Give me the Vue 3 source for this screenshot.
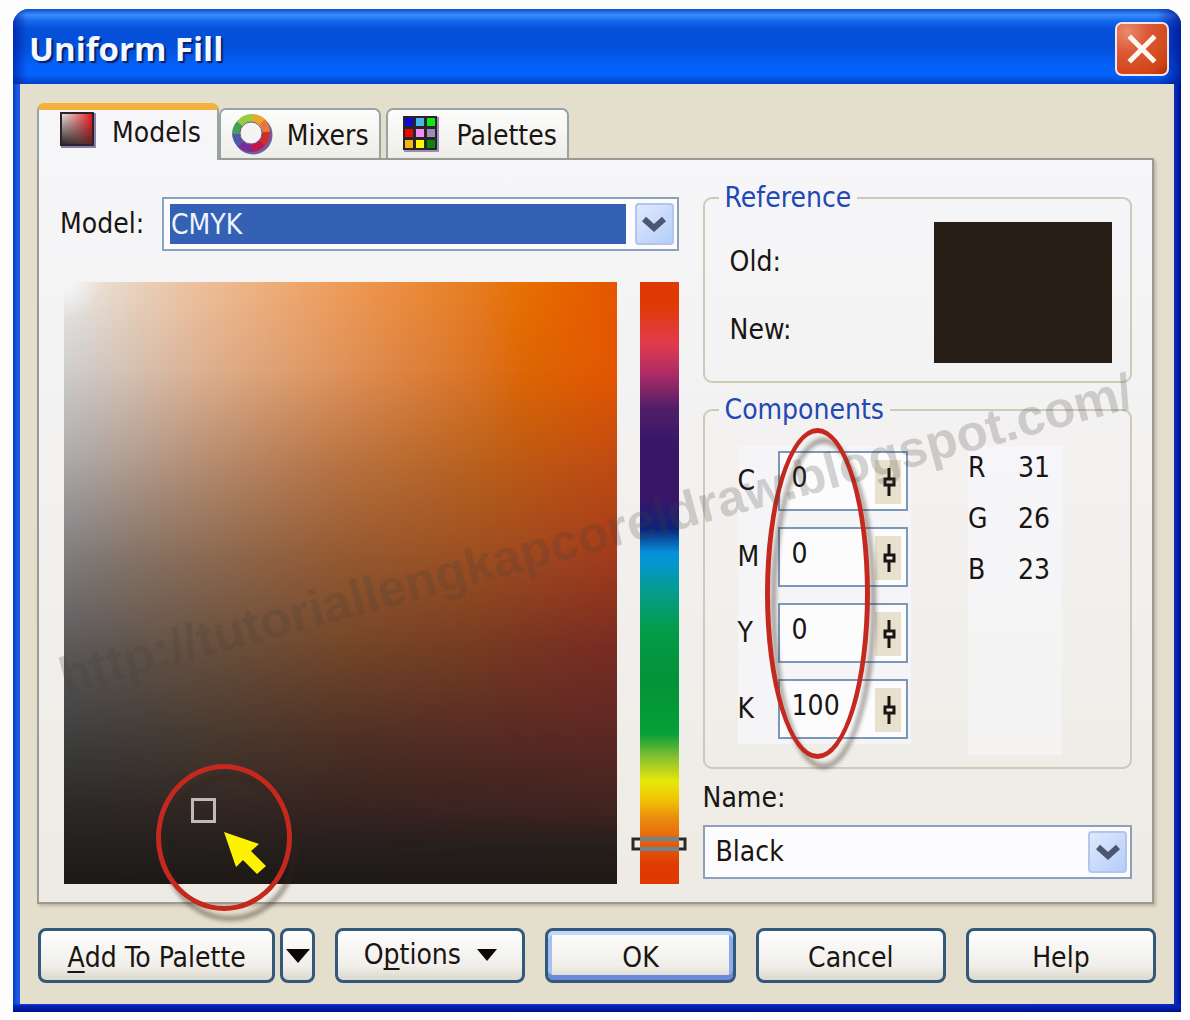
<script setup>
import { ref } from 'vue'

const model = ref('CMYK')
const name = ref('Black')
const inks = ref([
  { id: 'C', value: 0 },
  { id: 'M', value: 0 },
  { id: 'Y', value: 0 },
  { id: 'K', value: 100 }
])
const channels = [
  { id: 'R', value: 31 },
  { id: 'G', value: 26 },
  { id: 'B', value: 23 }
]
const swatches = ['#0a0ae0', '#48b8e8', '#10e818', '#e80808', '#f090f0', '#9c8cbc', '#f0b810', '#f8f808', '#088808']

/* Colour field: each row is a horizontal ramp, faded in over the row above it. */
const stops = [0, 12, 25, 50, 75, 83, 100]
const ramps = [
  { at: 0, colors: ['#ececec', '#ead4c0', '#eebf9a', '#ef9c5a', '#e77c1e', '#e87000', '#e45600'] },
  { at: 15, colors: ['#cdcdce', '#d4c0b2', '#dcb090', '#de925a', '#da7224', '#dc6604', '#e35600'] },
  { at: 30, colors: ['#aaa9aa', '#b09c90', '#b58d72', '#b87342', '#b9611d', '#bd5914', '#c04b12'] },
  { at: 45, colors: ['#807f80', '#867569', '#8c6c55', '#965a32', '#9e4f20', '#a04920', '#a43c1b'] },
  { at: 60, colors: ['#5c5b5b', '#62564e', '#695140', '#75482a', '#783c22', '#793622', '#7a2c22'] },
  { at: 75, colors: ['#3f403f', '#433d39', '#483b31', '#503225', '#572c23', '#5a2a24', '#5e2824'] },
  { at: 88, colors: ['#2a2827', '#2d2725', '#302623', '#362421', '#3b2320', '#3c2320', '#3f2420'] },
  { at: 93, colors: ['#242120', '#25211f', '#26211f', '#28201e', '#291f1d', '#291f1d', '#291f1c'] },
  { at: 100, colors: ['#1c1917', '#1c1917', '#1c1917', '#1c1916', '#1d1916', '#1d1916', '#1d1916'] }
].map((row, i, all) => {
  const fade = i ? `linear-gradient(transparent ${all[i - 1].at}%, #000 ${row.at}%)` : 'none'
  return {
    background: `linear-gradient(90deg, ${row.colors.map((c, n) => `${c} ${stops[n]}%`).join(', ')})`,
    maskImage: fade
  }
})
</script>

<template>
  <main class="dialog">
    <header class="titlebar">
      <h1>Uniform Fill</h1>
      <button class="close" type="button" aria-label="Close">
        <svg viewBox="0 0 54 54" width="54" height="54">
          <path d="M16 16L38 38M38 16L16 38" stroke="#fff8f0" stroke-width="5" stroke-linecap="square" />
        </svg>
      </button>
    </header>

    <div class="body">
      <nav class="tabs">
        <button class="tab active" type="button">
          <svg width="38" height="38" viewBox="0 0 38 38">
            <defs>
              <linearGradient id="tone" x1="0" y1="0" x2="1" y2="0">
                <stop offset="0" stop-color="#f4eeee" />
                <stop offset="0.5" stop-color="#e08080" />
                <stop offset="1" stop-color="#dc1820" />
              </linearGradient>
              <linearGradient id="shade" x1="0.3" y1="0" x2="0" y2="1">
                <stop offset="0" stop-color="#302828" stop-opacity="0" />
                <stop offset="1" stop-color="#302828" />
              </linearGradient>
            </defs>
            <path d="M2 2H37V37H2z" fill="#8c80b0" />
            <path d="M1 1H35V35H1z" fill="#2c2426" />
            <path d="M3 3H33V33H3z" fill="url(#tone)" />
            <path d="M3 3H33V33H3z" fill="url(#shade)" />
          </svg>
          Models
        </button>
        <button class="tab" type="button">
          <svg width="42" height="42" viewBox="0 0 42 42" fill="none" stroke-width="8">
            <circle cx="22" cy="22" r="16" stroke="#6c60a0" stroke-width="7" />
            <path d="M21 5A15 15 0 0 1 32 10" stroke="#eda62c" />
            <path d="M31 9A15 15 0 0 1 35 20" stroke="#e87838" />
            <path d="M35 19A15 15 0 0 1 30 31" stroke="#d02c28" />
            <path d="M31 30A15 15 0 0 1 20 35" stroke="#c01848" />
            <path d="M21 35A15 15 0 0 1 9 30" stroke="#7c2c98" />
            <path d="M10 31A15 15 0 0 1 5 20" stroke="#5058a8" />
            <path d="M5 21A15 15 0 0 1 10 10" stroke="#489c60" />
            <path d="M9 11A15 15 0 0 1 22 5" stroke="#98cc40" />
            <circle cx="20" cy="20" r="11" fill="#f4f4f4" stroke="#6a5c78" stroke-width="1" />
          </svg>
          Mixers
        </button>
        <button class="tab" type="button">
          <svg width="38" height="38" viewBox="0 0 38 38">
            <path d="M2 2H37V37H2z" fill="#9c8cb4" />
            <path d="M1 1H35V35H1z" fill="#282428" />
            <rect
              v-for="(c, i) in swatches"
              :key="c"
              :x="3 + (i % 3) * 11"
              :y="3 + Math.floor(i / 3) * 11"
              width="8"
              height="8"
              :fill="c"
            />
          </svg>
          Palettes
        </button>
      </nav>

      <section class="panel">
        <div class="left">
          <div class="model-row">
            <label for="model">Model:</label>
            <div class="combo focused">
              <select id="model" v-model="model">
                <option>CMYK</option>
              </select>
              <span class="drop">
                <svg width="24" height="18" viewBox="0 0 24 18">
                  <path d="M2 4L12 13L22 4" fill="none" stroke="#4a5672" stroke-width="6" />
                </svg>
              </span>
            </div>
          </div>

          <div class="picker">
            <div class="field">
              <div v-for="(ramp, i) in ramps" :key="i" class="ramp" :style="ramp"></div>
              <div class="corner"></div>
              <span class="marker"></span>
              <svg class="pointer" width="44" height="44" viewBox="0 0 44 44">
                <path d="M1 1L36 13L28 20L43 35L34 43L20 29L13 36z" fill="#fff200" />
              </svg>
              <span class="ring small"></span>
            </div>
            <div class="hue">
              <svg class="handle" width="56" height="14" viewBox="0 0 56 14" fill="none">
                <rect x="2" y="2" width="52" height="10" stroke="#2c2824" stroke-width="3" />
                <path d="M9 2H48M9 12H48" stroke="#6c8494" stroke-width="4" />
              </svg>
            </div>
          </div>
        </div>

        <div class="right">
          <fieldset class="reference">
            <legend>Reference</legend>
            <div class="names">
              <span>Old:</span>
              <span>New:</span>
            </div>
            <div class="preview"></div>
          </fieldset>

          <fieldset class="components">
            <legend>Components</legend>
            <div class="inks">
              <div v-for="ink in inks" :key="ink.id" class="ink">
                <label :for="'ink-' + ink.id">{{ ink.id }}</label>
                <div class="spin">
                  <input :id="'ink-' + ink.id" v-model="ink.value" type="text" />
                  <button type="button" :aria-label="'Adjust ' + ink.id">
                    <svg width="26" height="44" viewBox="0 0 26 44">
                      <path d="M14 8V36" stroke="#1a1412" stroke-width="3" />
                      <rect x="10" y="19" width="9" height="6" fill="#f4f0e0" stroke="#1a1412" stroke-width="3" />
                    </svg>
                  </button>
                </div>
              </div>
            </div>
            <dl class="channels">
              <template v-for="ch in channels" :key="ch.id">
                <dt>{{ ch.id }}</dt>
                <dd>{{ ch.value }}</dd>
              </template>
            </dl>
            <span class="ring tall"></span>
          </fieldset>

          <label class="name-label" for="name">Name:</label>
          <div class="combo">
            <select id="name" v-model="name">
              <option>Black</option>
            </select>
            <span class="drop">
              <svg width="24" height="18" viewBox="0 0 24 18">
                <path d="M2 4L12 13L22 4" fill="none" stroke="#4a5672" stroke-width="6" />
              </svg>
            </span>
          </div>
        </div>

        <div class="watermark">http://tutoriallengkapcoreldraw.blogspot.com/</div>
      </section>

      <footer class="actions">
        <div class="split">
          <button class="btn wide" type="button"><u>A</u>dd To Palette</button>
          <button class="btn arrow" type="button" aria-label="More palettes">
            <svg width="24" height="14" viewBox="0 0 24 14"><path d="M0 0H24L12 14z" fill="#0c0806" /></svg>
          </button>
        </div>
        <button class="btn options" type="button">
          <span>O<u>p</u>tions</span>
          <svg width="20" height="12" viewBox="0 0 20 12"><path d="M0 0H20L10 12z" fill="#0c0806" /></svg>
        </button>
        <button class="btn default" type="button">OK</button>
        <button class="btn" type="button">Cancel</button>
        <button class="btn" type="button">Help</button>
      </footer>
    </div>
  </main>
</template>

<style>
body {
  margin: 0;
  background: #fcfdfc;
}
</style>

<style scoped>
* {
  box-sizing: border-box;
}

.dialog {
  margin: 9px 9px 8px 13px;
  border-radius: 16px 16px 0 0;
  background:
    linear-gradient(0deg, #00108c, #0828b8 7px, transparent 8px),
    linear-gradient(90deg, #0a3cc8, #1c5ae6 5px, #1c5ae6 50%, #0a32c0 calc(100% - 7px), #00108c);
  overflow: hidden;
  color: #1a1412;
  font: 28px/34px 'DejaVu Sans Condensed', 'DejaVu Sans', sans-serif;
}

button,
input,
select {
  margin: 0;
  color: inherit;
  font: inherit;
}

.titlebar {
  display: flex;
  align-items: center;
  justify-content: space-between;
  height: 75px;
  padding: 4px 12px 0 16px;
  background:
    linear-gradient(90deg, rgba(0, 20, 150, 0.6), transparent 14px, transparent calc(100% - 24px), rgba(0, 10, 130, 0.7)),
    linear-gradient(#0a50d0, #3a8cfa 6px, #1468ec 12px, #0450d8 20px, #0450dc 38px, #0560f8 56px, #0562fa 66px, #0344cc 74px);
}

h1 {
  margin: 0;
  color: #f4f8ff;
  font: bold 33px/44px 'Open Sans', 'Noto Sans', sans-serif;
  text-shadow: 2px 2px 1px #06206c;
}

.close {
  display: flex;
  width: 54px;
  height: 54px;
  padding: 0;
  border: 2px solid #f4e4ec;
  border-radius: 7px;
  background: radial-gradient(circle at 20% 15%, #ea8a6c, #dc5a38 35%, #d04414 80%, #a83008);
}

.close svg {
  margin: -2px;
}

.body {
  margin: 0 7px 8px;
  padding: 19px 20px 21px 17px;
  background: #e4dfcc;
}

.tabs {
  display: flex;
  align-items: flex-end;
}

.tab {
  display: flex;
  align-items: center;
  gap: 14px;
  height: 50px;
  margin-right: 5px;
  padding: 4px 10px 0;
  border: 2px solid #98a4a4;
  border-bottom: 0;
  border-radius: 7px 7px 0 0;
  background: linear-gradient(#fcfcfb, #eeede8);
}

.tab:last-child {
  gap: 17px;
  padding-left: 14px;
}

.tab svg {
  margin-bottom: 4px;
}

.tab.active {
  position: relative;
  z-index: 1;
  gap: 15px;
  height: 57px;
  margin: 0 0 -2px;
  padding: 0 16px 4px 20px;
  border-top: 7px solid #f4b03a;
  background: #f6f6f8;
}

.tab.active svg {
  margin-bottom: 6px;
}

.panel {
  position: relative;
  display: grid;
  grid-template-columns: 618fr 429fr;
  gap: 24px;
  padding: 21px 20px 18px 21px;
  border: 2px solid #989c94;
  background: linear-gradient(#f6f6f9, #eeebe4);
  box-shadow: 2px 2px 3px rgba(120, 112, 90, 0.4);
}

.left {
  padding-top: 16px;
}

.model-row {
  display: grid;
  grid-template-columns: 102px 1fr;
  align-items: center;
  margin-bottom: 31px;
}

.combo {
  display: flex;
  align-items: stretch;
  gap: 8px;
  height: 54px;
  padding: 4px 3px 4px 5px;
  border: 2px solid #8ca2bc;
  background: #fcfcfe;
}

.combo select {
  flex: 1;
  min-width: 0;
  padding: 0 6px;
  border: 0;
  outline: 0;
  appearance: none;
  background: transparent;
}

.combo.focused select {
  margin: 1px;
  padding: 2px 1px 0;
  background: #3461b4;
  color: #eef4ff;
}

.drop {
  display: flex;
  align-items: center;
  justify-content: center;
  width: 39px;
  border: 2px solid #b4c4ec;
  border-radius: 4px;
  background: linear-gradient(135deg, #dfe9fd, #b4cdf8);
}

.picker {
  display: flex;
  gap: 23px;
  margin-left: 4px;
}

.field {
  position: relative;
  flex: 1;
  height: 602px;
}

.ramp {
  position: absolute;
  inset: 0;
}

.corner {
  position: absolute;
  inset: 0;
  background: radial-gradient(circle at 0 0, #f6f6f8, rgba(246, 246, 248, 0) 36px);
}

.marker {
  position: absolute;
  left: 127px;
  top: 516px;
  width: 25px;
  height: 25px;
  border: 3px solid #c0bab8;
}

.pointer {
  position: absolute;
  left: 159px;
  top: 549px;
}

.ring {
  position: absolute;
  z-index: 1;
  border: 5px solid #c4281e;
  border-radius: 50%;
  filter: drop-shadow(6px 10px 2px rgba(50, 35, 25, 0.45));
  pointer-events: none;
}

.ring.small {
  left: 92px;
  top: 482px;
  width: 136px;
  height: 147px;
}

.ring.tall {
  left: 60px;
  top: 1px;
  width: 105px;
  height: 331px;
}

.hue {
  position: relative;
  width: 39px;
  background: linear-gradient(#df3a04 0, #df3a04 4%, #e23c4c 10%, #b02c64 15%, #501e68 21%, #381668 27%, #381668 36%, #0c2478 41%, #0590dc 45%, #0498cc 47%, #049c90 51%, #049c48 58%, #049238 66%, #04a038 75%, #88c030 79%, #e8e808 83%, #f0c404 86%, #ec8c10 89%, #e46008 93%, #df3a04 97%);
}

.handle {
  position: absolute;
  left: -9px;
  bottom: 33px;
}

.right {
  min-width: 0;
}

fieldset {
  position: relative;
  display: flex;
  justify-content: space-between;
  min-width: 0;
  margin: 0 0 10px;
  padding: 0;
  border: 2px solid #cdcbb6;
  border-radius: 9px;
}

legend {
  margin-left: 14px;
  padding: 0 6px;
  color: #2148b4;
}

.reference {
  height: 202px;
}

.names {
  display: flex;
  flex-direction: column;
  gap: 34px;
  padding: 30px 0 0 25px;
}

.preview {
  width: 178px;
  height: 141px;
  margin: 7px 18px 0 0;
  background: #281e16;
}

.components {
  height: 376px;
  margin-bottom: 12px;
}

.inks {
  display: grid;
  gap: 16px;
  align-self: flex-start;
  margin: 19px 0 0 33px;
  padding: 5px 3px 5px 0;
  background: #f5f5f7;
}

.ink {
  display: grid;
  grid-template-columns: 40px 130px;
  align-items: center;
}

.spin {
  display: flex;
  height: 60px;
  padding: 7px 5px;
  border: 2px solid #7c98b8;
  background: #fcfcfd;
}

.spin input {
  flex: 1;
  width: 0;
  padding: 0 0 6px 7px;
  border: 0;
  outline: 0;
  background: transparent;
}

.spin button {
  display: flex;
  width: 26px;
  height: 44px;
  padding: 0;
  border: 0;
  background: #e6e0cc;
}

.channels {
  display: grid;
  grid-template-columns: 50px 44px;
  align-content: start;
  gap: 17px 0;
  height: 309px;
  margin: 19px 68px 0 0;
  padding-top: 5px;
  background: linear-gradient(#f6f6fa, #f4f3f2);
}

.channels dd {
  margin: 0;
}

.name-label {
  display: block;
  margin-bottom: 10px;
}

.watermark {
  position: absolute;
  z-index: 2;
  left: 26px;
  top: 487px;
  color: rgba(70, 62, 60, 0.22);
  font: bold 51px/60px 'Liberation Sans', Arial, sans-serif;
  white-space: nowrap;
  transform: rotate(-15deg);
  transform-origin: 0 48px;
  pointer-events: none;
}

.actions {
  display: grid;
  grid-template-columns: 277fr 190fr 190fr 190fr 190fr;
  gap: 20px;
  margin: 24px -2px 0 1px;
}

.split {
  display: flex;
  gap: 5px;
}

.btn {
  display: flex;
  align-items: center;
  justify-content: center;
  height: 55px;
  padding: 4px 0 0;
  border: 3px solid #34587c;
  border-radius: 8px;
  background: linear-gradient(#fdfdfc, #f0efea 70%, #dcd8cc);
}

.btn u {
  text-decoration-thickness: 2px;
  text-underline-offset: 4px;
  text-decoration-skip-ink: none;
}

.btn.wide {
  flex: 1;
}

.btn.arrow {
  width: 35px;
  padding: 0;
}

.btn.options {
  gap: 16px;
  padding: 0 0 2px;
}

.btn.default {
  box-shadow: inset 0 4px 0 #c0d8fa, inset 0 -5px 0 #6c88d8, inset 4px 0 0 #a8c0f0, inset -4px 0 0 #8cacec;
}
</style>
